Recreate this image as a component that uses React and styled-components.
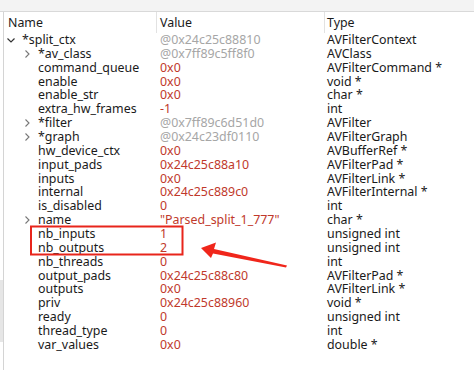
import React from 'react';
import styled, { createGlobalStyle } from 'styled-components';

const GlobalStyle = createGlobalStyle`
  html, body {
    margin: 0;
    padding: 0;
    background: #ffffff;
  }
  body {
    font-family: "Noto Sans", "Open Sans", sans-serif;
    font-size: 12.4px;
  }
`;

const Window = styled.div`
  position: relative;
  width: 474px;
  height: 370px;
  overflow: hidden;
  background: #fff;
`;

const TopBand = styled.div`
  height: 11px;
  background: #f3f3f3;
  border-bottom: 1px solid #d9d9d9;
`;

const Body = styled.div`
  display: flex;
  height: 358px;
`;

const LeftStrip = styled.div`
  width: 3px;
  flex-shrink: 0;
  border-right: 1px solid #d4d4d4;
  background: linear-gradient(#fff 0, #fff 268px, #e6e6e6 268px, #e6e6e6 330px, #fff 330px);
`;

const Tree = styled.div`
  flex: 1;
  display: flex;
  flex-direction: column;
`;

const Header = styled.div`
  display: grid;
  grid-template-columns: 153px 168px 1fr;
  height: 21px;
  align-items: center;
  color: #1a1a1a;
`;

const HeadCell = styled.div`
  height: 100%;
  display: flex;
  align-items: center;
  padding-left: ${p => p.$pad}px;
  border-right: ${p => (p.$sep ? '1px solid #e2e2e2' : 'none')};
`;

const Row = styled.div`
  display: grid;
  grid-template-columns: 153px 168px 1fr;
  height: 13.86px;
  line-height: 13.86px;
  white-space: nowrap;
`;

const NameCell = styled.div`
  display: flex;
  align-items: center;
  padding-left: ${p => 2 + p.$level * 16}px;
  color: #1a1a1a;
`;

const Toggle = styled.span`
  width: 10px;
  height: 10px;
  margin-right: 6px;
  display: inline-flex;
  align-items: center;
  justify-content: center;
  flex-shrink: 0;
`;

const ValueCell = styled.div`
  padding-left: 3px;
  color: ${p => (p.$dim ? '#a6a6a6' : '#c0392b')};
`;

const TypeCell = styled.div`
  padding-left: 2px;
  color: #1a1a1a;
`;

const Overlay = styled.svg`
  position: absolute;
  left: 0;
  top: 0;
  pointer-events: none;
`;

const Chevron = ({ open }) => (
  <svg width="10" height="10" viewBox="0 0 10 10">
    {open ? (
      <polyline points="1.5,3.5 5,7 8.5,3.5" fill="none" stroke="#333" strokeWidth="1.2" />
    ) : (
      <polyline points="3.5,1.5 7,5 3.5,8.5" fill="none" stroke="#777" strokeWidth="1.1" />
    )}
  </svg>
);

const rows = [
  { name: '*split_ctx', value: '@0x24c25c88810', dim: true, type: 'AVFilterContext', level: 0, toggle: 'open' },
  { name: '*av_class', value: '@0x7ff89c5ff8f0', dim: true, type: 'AVClass', level: 1, toggle: 'closed' },
  { name: 'command_queue', value: '0x0', type: 'AVFilterCommand *', level: 1 },
  { name: 'enable', value: '0x0', type: 'void *', level: 1 },
  { name: 'enable_str', value: '0x0', type: 'char *', level: 1 },
  { name: 'extra_hw_frames', value: '-1', type: 'int', level: 1 },
  { name: '*filter', value: '@0x7ff89c6d51d0', dim: true, type: 'AVFilter', level: 1, toggle: 'closed' },
  { name: '*graph', value: '@0x24c23df0110', dim: true, type: 'AVFilterGraph', level: 1, toggle: 'closed' },
  { name: 'hw_device_ctx', value: '0x0', type: 'AVBufferRef *', level: 1 },
  { name: 'input_pads', value: '0x24c25c88a10', type: 'AVFilterPad *', level: 1 },
  { name: 'inputs', value: '0x0', type: 'AVFilterLink *', level: 1 },
  { name: 'internal', value: '0x24c25c889c0', type: 'AVFilterInternal *', level: 1 },
  { name: 'is_disabled', value: '0', type: 'int', level: 1 },
  { name: 'name', value: '"Parsed_split_1_777"', type: 'char *', level: 1, toggle: 'closed' },
  { name: 'nb_inputs', value: '1', type: 'unsigned int', level: 1 },
  { name: 'nb_outputs', value: '2', type: 'unsigned int', level: 1 },
  { name: 'nb_threads', value: '0', type: 'int', level: 1 },
  { name: 'output_pads', value: '0x24c25c88c80', type: 'AVFilterPad *', level: 1 },
  { name: 'outputs', value: '0x0', type: 'AVFilterLink *', level: 1 },
  { name: 'priv', value: '0x24c25c88960', type: 'void *', level: 1 },
  { name: 'ready', value: '0', type: 'unsigned int', level: 1 },
  { name: 'thread_type', value: '0', type: 'int', level: 1 },
  { name: 'var_values', value: '0x0', type: 'double *', level: 1 },
];

export default function App() {
  return (
    <Window>
      <GlobalStyle />
      <TopBand />
      <Body>
        <LeftStrip />
        <Tree>
          <Header>
            <HeadCell $pad={4} $sep>Name</HeadCell>
            <HeadCell $pad={3} $sep>Value</HeadCell>
            <HeadCell $pad={2}>Type</HeadCell>
          </Header>
          {rows.map(r => (
            <Row key={r.name}>
              <NameCell $level={r.level}>
                <Toggle>{r.toggle && <Chevron open={r.toggle === 'open'} />}</Toggle>
                {r.name}
              </NameCell>
              <ValueCell $dim={r.dim}>{r.value}</ValueCell>
              <TypeCell>{r.type}</TypeCell>
            </Row>
          ))}
        </Tree>
      </Body>
      {/* red annotation: box round nb_inputs / nb_outputs and an arrow */}
      <Overlay width="474" height="370" viewBox="0 0 474 370">
        <rect x="31" y="226.5" width="151.5" height="28" fill="none" stroke="#e8251b" strokeWidth="2" />
        <polygon
          points="201,248 216,242.5 214,249 287,265.5 286,267.5 213,253.5 211,258"
          fill="#f0261b"
        />
      </Overlay>
    </Window>
  );
}
